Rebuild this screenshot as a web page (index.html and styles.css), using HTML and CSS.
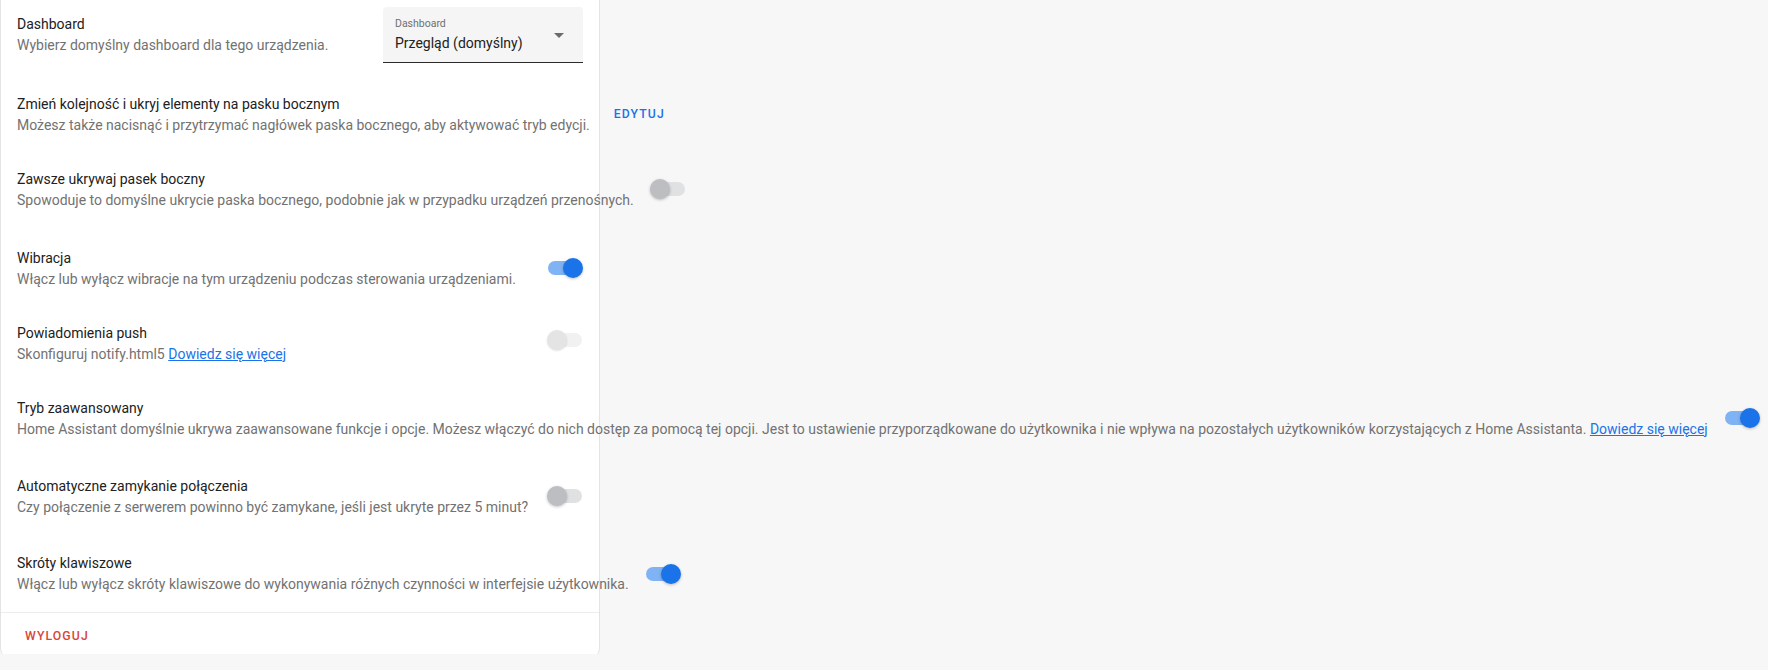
FILE: index.html
```html
<!DOCTYPE html>
<html lang="pl">
<head>
<meta charset="utf-8">
<title>Profil</title>
<link rel="stylesheet" href="styles.css">
</head>
<body>
<div class="page">
  <div class="card">
    <div class="rows">
      <div class="row spaced">
        <div class="body">
          <div class="title">Dashboard</div>
          <div class="desc">Wybierz domyślny dashboard dla tego urządzenia.</div>
        </div>
        <div class="select">
          <div class="select-label">Dashboard</div>
          <div class="select-value">Przegląd (domyślny)</div>
          <span class="select-arrow"></span>
        </div>
      </div>

      <div class="row">
        <div class="body">
          <div class="title">Zmień kolejność i ukryj elementy na pasku bocznym</div>
          <div class="desc">Możesz także nacisnąć i przytrzymać nagłówek paska bocznego, aby aktywować tryb edycji.</div>
        </div>
        <button class="btn btn-primary">EDYTUJ</button>
      </div>

      <div class="row spaced-md">
        <div class="body">
          <div class="title">Zawsze ukrywaj pasek boczny</div>
          <div class="desc">Spowoduje to domyślne ukrycie paska bocznego, podobnie jak w przypadku urządzeń przenośnych.</div>
        </div>
        <span class="switch"><span class="track"></span><span class="knob"></span></span>
      </div>

      <div class="row">
        <div class="body">
          <div class="title">Wibracja</div>
          <div class="desc">Włącz lub wyłącz wibracje na tym urządzeniu podczas sterowania urządzeniami.</div>
        </div>
        <span class="switch on"><span class="track"></span><span class="knob"></span></span>
      </div>

      <div class="row">
        <div class="body">
          <div class="title">Powiadomienia push</div>
          <div class="desc">Skonfiguruj notify.html5 <a class="link" href="#">Dowiedz się więcej</a></div>
        </div>
        <span class="switch disabled"><span class="track"></span><span class="knob"></span></span>
      </div>

      <div class="row spaced-sm">
        <div class="body">
          <div class="title">Tryb zaawansowany</div>
          <div class="desc">Home Assistant domyślnie ukrywa zaawansowane funkcje i opcje. Możesz włączyć do nich dostęp za pomocą tej opcji. Jest to ustawienie przyporządkowane do użytkownika i nie wpływa na pozostałych użytkowników korzystających z Home Assistanta. <a class="link" href="#">Dowiedz się więcej</a></div>
        </div>
        <span class="switch on"><span class="track"></span><span class="knob"></span></span>
      </div>

      <div class="row spaced-xs">
        <div class="body">
          <div class="title">Automatyczne zamykanie połączenia</div>
          <div class="desc">Czy połączenie z serwerem powinno być zamykane, jeśli jest ukryte przez 5 minut?</div>
        </div>
        <span class="switch"><span class="track"></span><span class="knob"></span></span>
      </div>

      <div class="row">
        <div class="body">
          <div class="title">Skróty klawiszowe</div>
          <div class="desc">Włącz lub wyłącz skróty klawiszowe do wykonywania różnych czynności w interfejsie użytkownika.</div>
        </div>
        <span class="switch on low"><span class="track"></span><span class="knob"></span></span>
      </div>
    </div>
    <div class="actions">
      <button class="btn btn-danger">WYLOGUJ</button>
    </div>
  </div>
</div>
</body>
</html>
```

FILE: styles.css
```css
* { box-sizing: border-box; }

html, body {
  margin: 0;
  padding: 0;
  background: #f7f7f7;
  font-family: Roboto, "Noto Sans", "Liberation Sans", sans-serif;
  -webkit-font-smoothing: antialiased;
  overflow: hidden;
}

.page {
  width: 1768px;
  height: 670px;
}

.card {
  width: 600px;
  margin-top: -16px;
  padding-top: 11px;
  background: #ffffff;
  border: 1px solid #e3e3e3;
  border-radius: 12px;
}

.rows {
  padding-bottom: 2px;
}

.row {
  display: flex;
  align-items: center;
  height: 75px;
  padding: 0 16px;
  min-width: 100%;
  width: max-content;
}

.row.spaced { margin-bottom: 5px; }
.row.spaced-md { margin-bottom: 4px; }
.row.spaced-sm { margin-bottom: 3px; }
.row.spaced-xs { margin-bottom: 2px; }

.body {
  flex: 1 1 auto;
  display: flex;
  flex-direction: column;
  padding-right: 16px;
  white-space: nowrap;
}

.title {
  font-size: 14px;
  line-height: 22px;
  color: #212121;
}

.desc {
  font-size: 14px;
  line-height: 20px;
  color: #727272;
}

.link {
  color: #1a73e8;
  text-decoration: underline;
}

/* select */
.select {
  position: relative;
  flex: 0 0 auto;
  width: 200px;
  height: 56px;
  margin-top: 3px;
  background: #f5f5f5;
  border-radius: 4px 4px 0 0;
  border-bottom: 1px solid #2b2b2b;
  padding: 10px 40px 0 12px;
}

.select-label {
  font-size: 10.5px;
  line-height: 14px;
  color: #6f6f6f;
}

.select-value {
  font-size: 14px;
  line-height: 24px;
  color: #212121;
  white-space: nowrap;
}

.select-arrow {
  position: absolute;
  right: 19px;
  top: 26px;
  width: 0;
  height: 0;
  border-left: 5px solid transparent;
  border-right: 5px solid transparent;
  border-top: 5px solid #6b6b6b;
}

/* buttons */
.btn {
  display: block;
  flex: 0 0 auto;
  height: 36px;
  padding: 0 8px;
  border: 0;
  background: transparent;
  font-family: Roboto, "Noto Sans", "Liberation Sans", sans-serif;
  font-size: 12.25px;
  font-weight: 500;
  letter-spacing: 1.1px;
  cursor: pointer;
}

.btn-primary { color: #1a73e8; }
.btn-danger { color: #db4437; }

/* switches */
.switch {
  position: relative;
  flex: 0 0 auto;
  width: 36px;
  height: 20px;
}

.switch.disabled { margin-bottom: 5px; }
.switch.low { margin-top: 3px; }

.switch .track {
  position: absolute;
  left: 1px;
  top: 3px;
  width: 34px;
  height: 14px;
  border-radius: 7px;
  background: #e0e1e3;
}

.switch .knob {
  position: absolute;
  left: 0;
  top: 0;
  width: 20px;
  height: 20px;
  border-radius: 50%;
  background: #bcbec2;
  box-shadow: 0 1px 3px rgba(0, 0, 0, 0.25);
}

.switch.on .track { background: #80b3f3; }
.switch.on .knob {
  left: 16px;
  background: #1a73e8;
}

.switch.disabled .track { background: #f1f1f1; }
.switch.disabled .knob {
  background: #e4e4e4;
  box-shadow: 0 1px 2px rgba(0, 0, 0, 0.12);
}

/* actions */
.actions {
  border-top: 1px solid #ececec;
  padding: 5px 16px;
}
```
